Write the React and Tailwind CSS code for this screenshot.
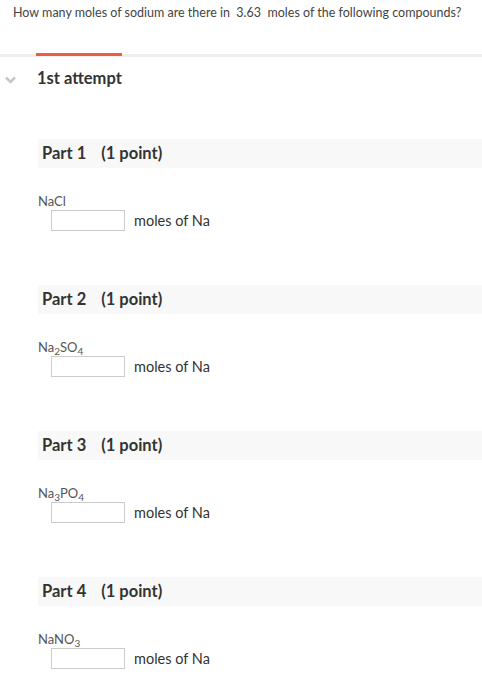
import React from "react";

const Sub = ({ children }) => <sub className="text-[10px] leading-none">{children}</sub>;

const parts = [
  { n: 1, label: <>NaCl</> },
  { n: 2, label: <>Na<Sub>2</Sub>SO<Sub>4</Sub></> },
  { n: 3, label: <>Na<Sub>3</Sub>PO<Sub>4</Sub></> },
  { n: 4, label: <>NaNO<Sub>3</Sub></> },
];

const Part = ({ n, label }) => (
  <div className="h-[146px]">
    <div className="ml-[38px] h-[29px] bg-[#f8f8f8] flex items-center pl-[4px] text-[16.5px] font-bold text-[#333]">
      <span>Part {n}</span>
      <span className="ml-[15px]">(1 point)</span>
    </div>
    <div className="ml-[38px] mt-[25px] h-[16px] leading-[16px] text-[13px] text-[#555]">{label}</div>
    <div className="flex items-center mt-[1px]">
      <div className="ml-[51px] w-[74px] h-[21px] border border-[#ccc] bg-white" />
      <span className="ml-[9px] text-[14.5px] text-[#333]">moles of Na</span>
    </div>
  </div>
);

export default function App() {
  return (
    <div className="w-[482px] h-[682px] overflow-hidden bg-white font-['Lato','Liberation_Sans',sans-serif]">
      <p className="pl-[13px] pt-[5px] h-[54px] text-[12.5px] text-[#444] leading-[16px] whitespace-nowrap">
        How many moles of sodium are there in&nbsp; 3.63 &nbsp;moles of the following compounds?
      </p>
      <div className="relative h-[3px] border-b-[3px] border-[#eee]">
        <div className="absolute left-[36px] -top-[1px] w-[86px] h-[3px] bg-[#e8603c]" />
      </div>
      <div className="flex items-center h-[42px]">
        <svg className="ml-[5px] mt-[4px] w-[11px] h-[8px]" viewBox="0 0 11 8">
          <path d="M1 1.5 L5.5 6 L10 1.5" fill="none" stroke="#c8c8c8" strokeWidth="2.6" />
        </svg>
        <span className="ml-[21px] text-[16.5px] font-bold text-[#333]">1st attempt</span>
      </div>
      <div className="h-[40px]" />
      {parts.map((p) => (
        <Part key={p.n} n={p.n} label={p.label} />
      ))}
    </div>
  );
}
